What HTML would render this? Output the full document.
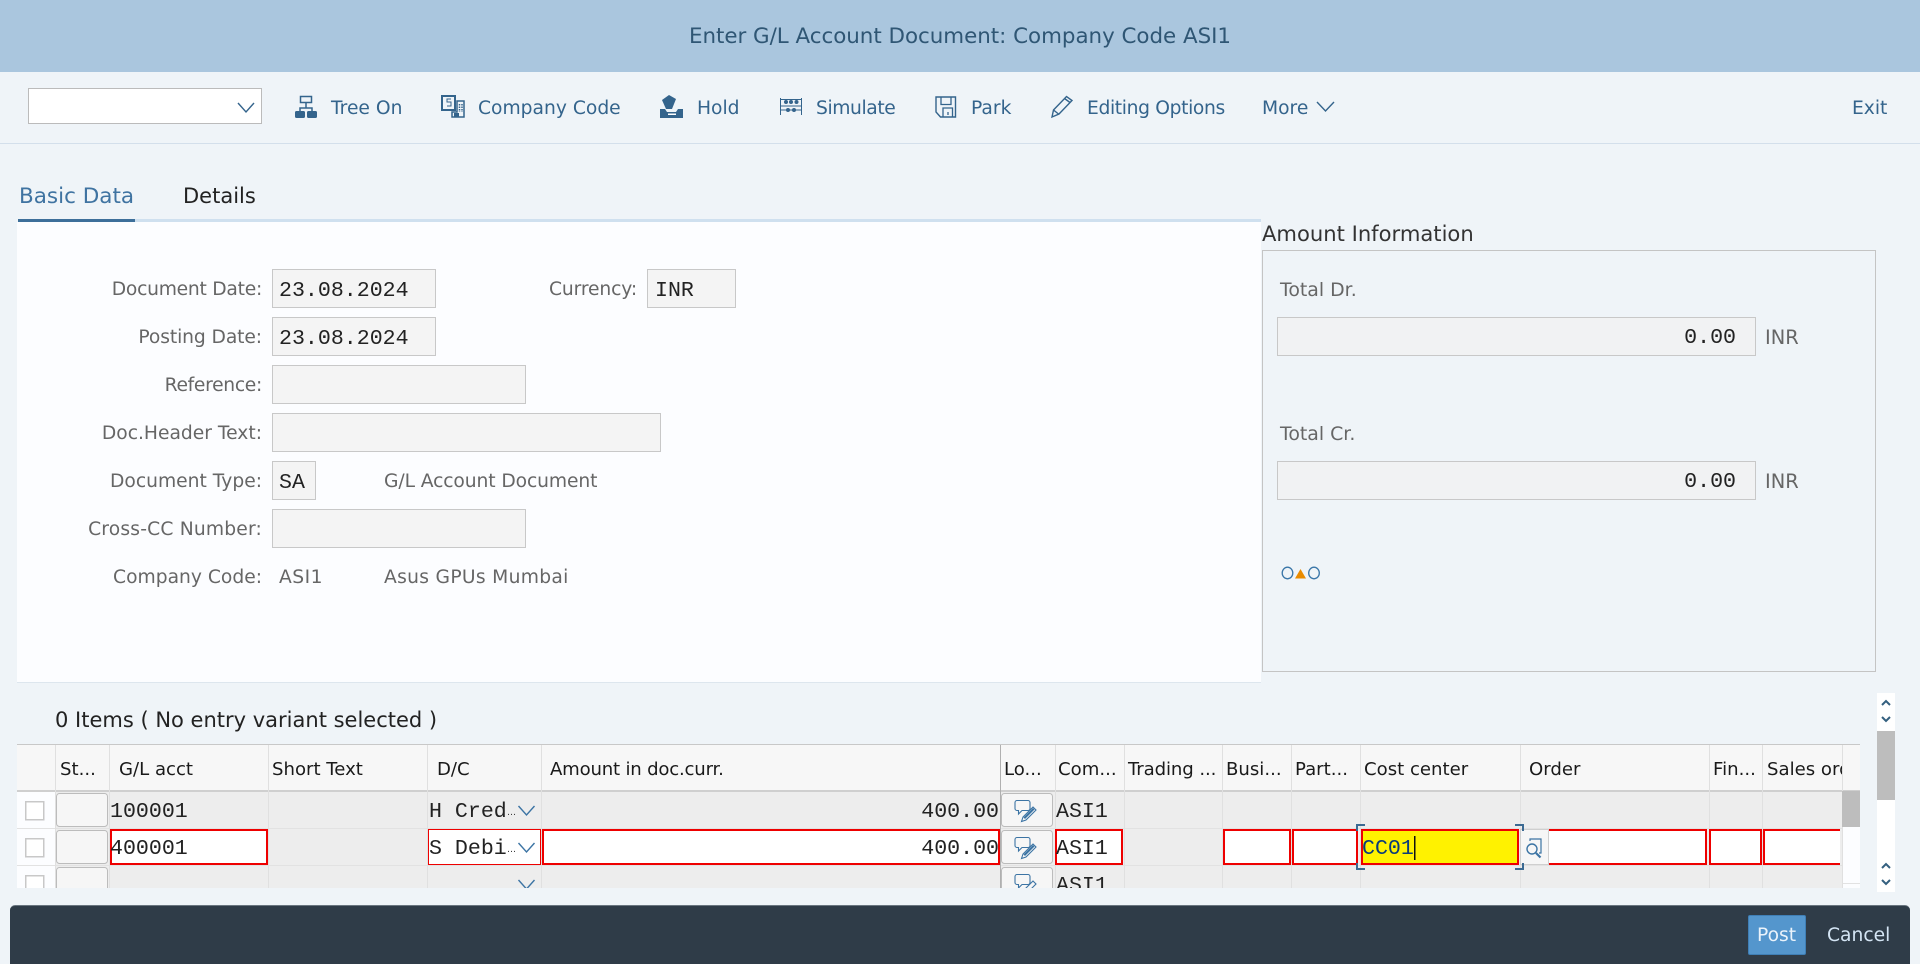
<!DOCTYPE html>
<html lang="en">
<head>
<meta charset="utf-8">
<title>Enter G/L Account Document</title>
<style>
html,body{margin:0;padding:0;width:1920px;height:964px;overflow:hidden;background:#eff4f8}
body{position:relative;font-family:"DejaVu Sans","Liberation Sans",sans-serif;font-size:18.7px;color:#666}
.a{position:absolute;white-space:nowrap;line-height:24px;height:24px}
.m{font-family:"Liberation Mono","DejaVu Sans Mono",monospace;font-size:21.6px;color:#222}
.tb{color:#34648c;font-size:18.7px;top:97px}
.l{color:#666;text-align:right;right:1658px}
.f{position:absolute;box-sizing:border-box;background:#f4f4f4;border:1px solid #c8c8c8;height:39px}
.h{color:#1a1a1a;font-size:18.1px;top:758px}
svg{position:absolute;left:0;top:0}
</style>
</head>
<body>
<!-- shell bar -->
<div style="position:absolute;left:0;top:0;width:1920px;height:72px;background:#aac6de"></div>
<div class="a" style="left:0;width:1920px;top:25px;text-align:center;font-size:21.4px;color:#2f5674;letter-spacing:-.02px">Enter G/L Account Document: Company Code ASI1</div>
<div style="position:absolute;left:0;top:143px;width:1920px;height:1px;background:#d3dfeb"></div>

<!-- toolbar -->
<div style="position:absolute;box-sizing:border-box;left:28px;top:88px;width:234px;height:36px;background:#fff;border:1px solid #bbb"></div>
<div class="a tb" style="left:331px">Tree On</div>
<div class="a tb" style="left:478px">Company Code</div>
<div class="a tb" style="left:697px">Hold</div>
<div class="a tb" style="left:816px;letter-spacing:-.4px">Simulate</div>
<div class="a tb" style="left:971px">Park</div>
<div class="a tb" style="left:1087px;letter-spacing:-.35px">Editing Options</div>
<div class="a tb" style="left:1262px">More</div>
<div class="a tb" style="left:1852px">Exit</div>

<svg width="1920" height="150" viewBox="0 0 1920 150" fill="none" stroke="#34648c">
  <path d="M238 103l8 9 8-9" stroke-width="1.4"/>
  <path d="M1317 102l8.500 9 8.500-9" stroke-width="1.4"/>
  <!-- tree -->
  <rect x="300.500" y="96.500" width="11" height="6" stroke-width="1.500"/>
  <path d="M306 103v5M300 111v-3h12v3" stroke-width="1.500"/>
  <rect x="295" y="111" width="10" height="7" rx="1.500" fill="#34648c" stroke="none"/>
  <rect x="307" y="111" width="10" height="7" rx="1.500" fill="#34648c" stroke="none"/>
  <!-- company code -->
  <rect x="442" y="96" width="13" height="14" stroke-width="2"/>
  <path d="M451 99h-4v3h4v4h-4" stroke-width="1"/>
  <path d="M457 101h7v16h-12v-5h5z" stroke-width="1.500"/>
  <path d="M459.500 104v8M462 104v8" stroke-width="1.500" stroke-dasharray="1.500 1"/>
  <rect x="454" y="113" width="5" height="4" fill="#34648c" stroke="none"/>
  <!-- hold -->
  <path d="M669 95l7 4-4 10h-6l-4-9z" fill="#34648c" stroke="none"/>
  <path d="M660 109h5l2 3h9l2-3h5v9h-23z" fill="#34648c" stroke="none"/>
  <rect x="668" y="113.500" width="8" height="1.500" fill="#fff" stroke="none"/>
  <!-- simulate -->
  <path d="M780.500 98v17M801.500 98v17M781 99.500h20M781 106h20" stroke-width="1"/>
  <g fill="#34648c" stroke="none">
    <circle cx="786" cy="102" r="2"/><circle cx="791" cy="102" r="2"/><circle cx="796.500" cy="102" r="2"/>
    <circle cx="788" cy="110" r="2"/><circle cx="794" cy="110" r="2"/>
  </g>
  <path d="M781 110h20" stroke-width="1"/>
  <!-- park -->
  <path d="M936 97h19.500v20h-15l-4.500-5z" stroke-width="1.400"/>
  <path d="M941 97v7.500h10V97" stroke-width="1.300"/>
  <path d="M943 117v-9h9.500v9M948 112v3" stroke-width="1.300"/>
  <!-- pen -->
  <path d="M1052 117l1.500-7 13-13.500 5.500 4-13 13.500zM1053.500 110l5 4M1064.500 98.500l5.500 4" stroke-width="1.400"/>
</svg>

<!-- tabs -->
<div class="a" style="left:19px;top:185px;font-size:21.5px;color:#3f73a1">Basic Data</div>
<div class="a" style="left:183px;top:184px;font-size:21px;color:#222">Details</div>
<div style="position:absolute;left:18px;top:219px;width:1243px;height:3px;background:#cfe0ef"></div>
<div style="position:absolute;left:18px;top:219px;width:117px;height:3px;background:#3d6f9a"></div>

<!-- form panel -->
<div style="position:absolute;left:17px;top:222px;width:1244px;height:460px;background:#fcfdff;border-bottom:1px solid #dde6ee"></div>
<div class="a l" style="top:278px;letter-spacing:-.25px">Document Date:</div>
<div class="a l" style="top:326px;letter-spacing:-.1px">Posting Date:</div>
<div class="a l" style="top:374px;letter-spacing:-.3px">Reference:</div>
<div class="a l" style="top:422px">Doc.Header Text:</div>
<div class="a l" style="top:470px">Document Type:</div>
<div class="a l" style="top:518px;letter-spacing:.18px">Cross-CC Number:</div>
<div class="a l" style="top:566px">Company Code:</div>
<div class="a" style="left:549px;top:278px;color:#666;letter-spacing:-.12px">Currency:</div>

<div class="f" style="left:272px;top:269px;width:164px"></div>
<div class="f" style="left:272px;top:317px;width:164px"></div>
<div class="f" style="left:272px;top:365px;width:254px"></div>
<div class="f" style="left:272px;top:413px;width:389px"></div>
<div class="f" style="left:272px;top:461px;width:44px"></div>
<div class="f" style="left:272px;top:509px;width:254px"></div>
<div class="f" style="left:647px;top:269px;width:89px"></div>
<div class="a m" style="left:279px;top:279px">23.08.2024</div>
<div class="a m" style="left:279px;top:327px">23.08.2024</div>
<div class="a m" style="left:655px;top:279px">INR</div>
<div class="a m" style="left:279px;top:471px">SA</div>
<div class="a" style="left:384px;top:470px;letter-spacing:-.1px">G/L Account Document</div>
<div class="a" style="left:279px;top:566px;letter-spacing:.5px">ASI1</div>
<div class="a" style="left:384px;top:566px;letter-spacing:.3px">Asus GPUs Mumbai</div>

<!-- amount information -->
<div class="a" style="left:1262px;top:222px;font-size:21.1px;color:#333">Amount Information</div>
<div style="position:absolute;box-sizing:border-box;left:1262px;top:250px;width:614px;height:422px;border:1px solid #c4c4c4"></div>
<div class="a" style="left:1280px;top:278px;font-size:18.9px">Total Dr.</div>
<div class="f" style="left:1277px;top:317px;width:479px;background:#f1f2f3"></div>
<div class="a m" style="right:184px;top:326px">0.00</div>
<div class="a" style="left:1765px;top:326px;font-size:19.4px">INR</div>
<div class="a" style="left:1280px;top:422px;font-size:18.9px">Total Cr.</div>
<div class="f" style="left:1277px;top:461px;width:479px;background:#f1f2f3"></div>
<div class="a m" style="right:184px;top:470px">0.00</div>
<div class="a" style="left:1765px;top:470px;font-size:19.4px">INR</div>
<svg width="1920" height="964" viewBox="0 0 1920 964" style="pointer-events:none">
  <ellipse cx="1287.500" cy="573" rx="5.300" ry="5.800" fill="none" stroke="#3a76a8" stroke-width="1.300"/>
  <path d="M1295 578.500l5.500-9.500 5.500 9.500z" fill="#e98b00"/>
  <ellipse cx="1314" cy="573" rx="5.300" ry="5.800" fill="none" stroke="#3a76a8" stroke-width="1.300"/>
</svg>

<!-- items title -->
<div class="a" style="left:55px;top:708px;font-size:21px;color:#222">0 Items ( No entry variant selected )</div>

<!-- table -->
<div style="position:absolute;left:0;top:0;width:1920px;height:964px;clip-path:inset(744px 0 76px 0)">
<svg width="1920" height="964" viewBox="0 0 1920 964" shape-rendering="crispEdges">
  <rect x="17" y="744" width="1843" height="48" fill="#f7f7f7"/>
  <rect x="55" y="792" width="1787" height="100" fill="#ededed"/>
  <rect x="17" y="792" width="38" height="100" fill="#fcfdff"/>
  <rect x="1842" y="792" width="18" height="100" fill="#fcfdff"/>
  <rect x="17" y="744" width="1843" height="1" fill="#c8c8c8"/>
  <rect x="17" y="790" width="1843" height="2" fill="#cfcfcf"/>
  <path d="M17 828.500H1842M17 865.500H1842M1842 883.500H1860" stroke="#e2e2e2"/>
  <path d="M55.500 745V890M109.500 745V890M268.500 745V890M427.500 745V890M541.500 745V890M1055.500 745V890M1124.500 745V890M1222.500 745V890M1291.500 745V890M1360.500 745V890M1520.500 745V890M1709.500 745V890M1762.500 745V890M1842.500 745V890" stroke="#e0e0e0"/>
  <path d="M1000.500 745V890" stroke="#b0b0b0"/>
  <rect x="1842" y="791" width="18" height="36" fill="#bdbdbd"/>
  <!-- checkboxes -->
  <g fill="#fff" stroke="#c8c8c8" stroke-width="1.500">
    <rect x="25.500" y="801.500" width="18" height="18"/>
    <rect x="25.500" y="838.500" width="18" height="18"/>
    <rect x="25.500" y="875.500" width="18" height="18"/>
  </g>
  <!-- status and note buttons -->
  <g fill="#f6f6f6" stroke="#bcbcbc" shape-rendering="auto">
    <rect x="56.500" y="793.500" width="51" height="33" rx="3"/>
    <rect x="56.500" y="830.500" width="51" height="33" rx="3"/>
    <rect x="56.500" y="867.500" width="51" height="33" rx="3"/>
    <rect x="1001.500" y="793.500" width="51" height="33" rx="3"/>
    <rect x="1001.500" y="830.500" width="51" height="33" rx="3"/>
    <rect x="1001.500" y="867.500" width="51" height="33" rx="3"/>
  </g>
  <!-- input cells -->
  <g fill="#fff" stroke="#ee0000" stroke-width="2">
    <rect x="111" y="830" width="156" height="34"/>
    <rect x="543" y="830" width="456" height="34"/>
    <rect x="1056" y="830" width="66" height="34"/>
    <rect x="1224" y="830" width="66" height="34"/>
    <rect x="1293" y="830" width="64" height="34"/>
    <path d="M1549 830H1706V864H1549" />
    <rect x="1710" y="830" width="51" height="34"/>
    <path d="M1840 830H1764V864H1840"/>
  </g>
  <rect x="428.500" y="829.500" width="112" height="35" fill="#fff" stroke="#ee0000"/>
  <rect x="1362" y="830" width="156" height="34" fill="#fff200" stroke="#ee0000" stroke-width="2"/>
  <rect x="1520.500" y="829.500" width="28" height="35" fill="#f6f6f6" stroke="#cfcfcf"/>
  <rect x="1414" y="836" width="1.500" height="24" fill="#111"/>
  <!-- focus brackets -->
  <g fill="none" stroke="#3c6a92" stroke-width="2">
    <path d="M1365 825H1357V831M1357 863V869H1365M1515 825H1523V831M1523 863V869H1515"/>
  </g>
  <g fill="none" stroke="#3c74a4" stroke-width="1.100" shape-rendering="auto">
    <!-- dropdown chevrons -->
    <path d="M518.500 806l8 9 8-9M518.500 843l8 9 8-9M518.500 880l8 9 8-9" stroke-width="1.400"/>
    <!-- note icons -->
    <path d="M1017 800.500h11a2 2 0 0 1 2 2v6a2 2 0 0 1-2 2h-6l-3.500 3.500v-3.500h-1.500a2 2 0 0 1-2-2v-6a2 2 0 0 1 2-2z"/>
    <path d="M1021.500 821.500l1.500-4.500 10-10 3 3-10 10z"/><path d="M1023.500 817.500l9.500-9.500 1.500 1.500-9.500 9.500z" fill="#3c74a4" stroke="none"/>
    <path d="M1017 837.500h11a2 2 0 0 1 2 2v6a2 2 0 0 1-2 2h-6l-3.500 3.500v-3.500h-1.500a2 2 0 0 1-2-2v-6a2 2 0 0 1 2-2z"/>
    <path d="M1021.500 858.500l1.500-4.500 10-10 3 3-10 10z"/><path d="M1023.500 854.500l9.500-9.500 1.500 1.500-9.500 9.500z" fill="#3c74a4" stroke="none"/>
    <path d="M1017 874.500h11a2 2 0 0 1 2 2v6a2 2 0 0 1-2 2h-6l-3.500 3.500v-3.500h-1.500a2 2 0 0 1-2-2v-6a2 2 0 0 1 2-2z"/>
    <path d="M1021.500 895.500l1.500-4.500 10-10 3 3-10 10z"/>
    <!-- search help -->
    <path d="M1530 841V839H1541V853H1539" stroke-width="1.200"/>
    <circle cx="1532" cy="849" r="5" stroke-width="1.400"/>
    <path d="M1536 853l4.500 4.500" stroke-width="2.200"/>
  </g>
</svg>
<div class="a m" style="left:110px;top:800px">100001</div>
<div class="a m" style="left:110px;top:837px">400001</div>
<div class="a m" style="left:429px;top:800px">H Cred</div>
<div class="a m" style="left:429px;top:837px">S Debi</div>
<div class="a" style="left:507px;top:801px;font-size:9px;color:#333">…</div>
<div class="a" style="left:507px;top:838px;font-size:9px;color:#333">…</div>
<div class="a m" style="right:921px;top:800px">400.00</div>
<div class="a m" style="right:921px;top:837px">400.00</div>
<div class="a m" style="left:1056px;top:800px">ASI1</div>
<div class="a m" style="left:1056px;top:837px">ASI1</div>
<div class="a m" style="left:1056px;top:874px">ASI1</div>
<div class="a m" style="left:1362px;top:837px;color:#0a3a7a">CC01</div>

<div class="a h" style="left:60px">St...</div>
<div class="a h" style="left:119px">G/L acct</div>
<div class="a h" style="left:272px">Short Text</div>
<div class="a h" style="left:437px">D/C</div>
<div class="a h" style="left:550px;letter-spacing:-.2px">Amount in doc.curr.</div>
<div class="a h" style="left:1004px">Lo...</div>
<div class="a h" style="left:1058px">Com...</div>
<div class="a h" style="left:1128px;letter-spacing:-.1px">Trading ...</div>
<div class="a h" style="left:1226px">Busi...</div>
<div class="a h" style="left:1295px">Part...</div>
<div class="a h" style="left:1364px">Cost center</div>
<div class="a h" style="left:1529px">Order</div>
<div class="a h" style="left:1713px">Fin...</div>
<div class="a h" style="left:1767px;width:75px;overflow:hidden">Sales order</div>
</div>

<!-- outer scrollbar -->
<div style="position:absolute;left:1877px;top:693px;width:18px;height:199px;background:#fff"></div>
<div style="position:absolute;left:1877px;top:731px;width:18px;height:69px;background:#bdbdbd"></div>
<svg width="1920" height="964" viewBox="0 0 1920 964" fill="none" stroke="#34607f" stroke-width="2" style="pointer-events:none">
  <path d="M1882 705l4-4 4 4M1882 717l4 4 4-4M1882 868l4-4 4 4M1882 880l4 4 4-4"/>
</svg>

<!-- footer -->
<div style="position:absolute;box-sizing:border-box;left:10px;top:905px;width:1900px;height:59px;background:#2f3c48;border-top:1px solid #69757f;border-radius:5px 5px 0 0"></div>
<div style="position:absolute;box-sizing:border-box;left:1748px;top:915px;width:58px;height:40px;background:#5496cd;border:1px solid #3f7fb6;border-radius:2px"></div>
<div class="a" style="left:1757px;top:924px;color:#eaf3fb;font-size:18.7px">Post</div>
<div class="a" style="left:1827px;top:924px;color:#d4e5f4;font-size:18.7px">Cancel</div>
</body>
</html>
